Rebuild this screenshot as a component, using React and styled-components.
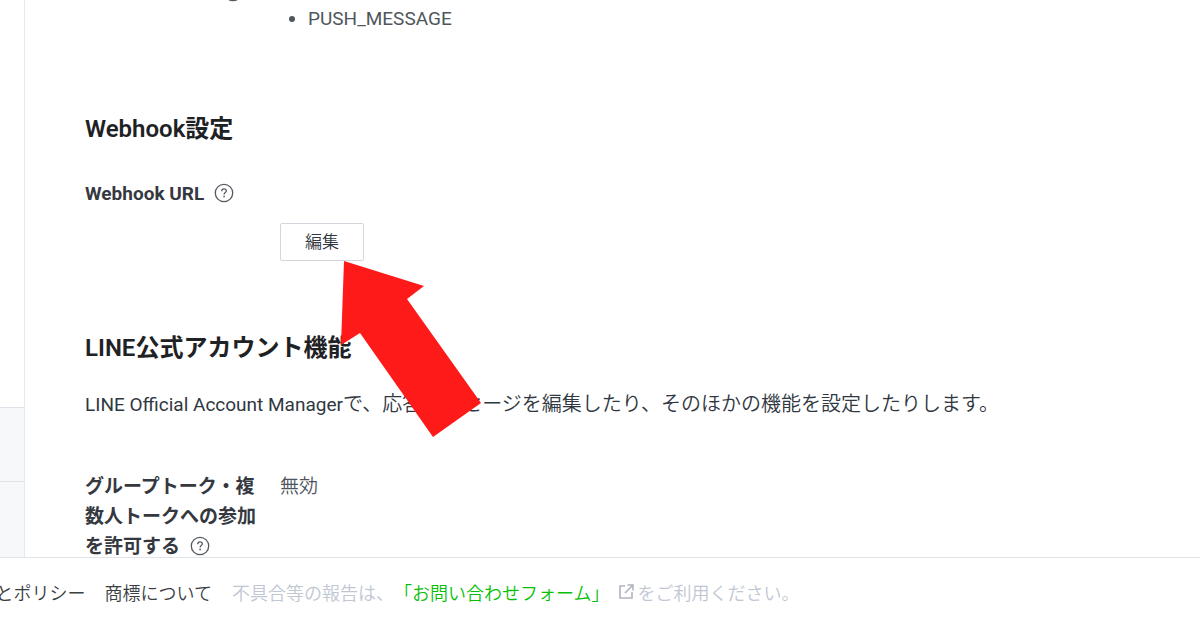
import styled, { createGlobalStyle } from 'styled-components';

const GlobalStyle = createGlobalStyle`
  * {
    box-sizing: border-box;
  }

  body {
    margin: 0;
    background: #fff;
    color: #303741;
    font-family: Roboto, "Noto Sans CJK JP", sans-serif;
    font-size: 19px;
    line-height: 30px;
    text-spacing-trim: space-all;
  }
`;

const Page = styled.div`
  display: flex;
  flex-direction: column;
  height: 100vh;
  overflow: hidden;
`;

const Body = styled.div`
  display: flex;
  flex: 1;
  min-height: 0;
  overflow: hidden;
`;

const Sidebar = styled.aside`
  display: flex;
  flex: none;
  flex-direction: column;
  justify-content: flex-end;
  width: 25px;
  border-right: 1px solid #e3e9f0;
`;

const SideBlock = styled.div`
  height: ${({ $height }) => $height}px;
  border-top: 1px solid #dfe3e9;
  background: #f7f8fa;
`;

const Main = styled.main`
  flex: 1;
  padding: 0 60px;
`;

const Row = styled.section`
  display: grid;
  grid-template-columns: 180px 1fr;
  column-gap: 15px;
`;

const Label = styled.h3`
  margin: 0;
  color: #35393f;
  font-size: 19px;
  font-weight: 700;
`;

const WebhookLabel = styled(Label)`
  grid-column: 1 / -1;
  margin-top: 32px;
`;

// the row above is scrolled almost out of view
const ScrolledHelp = styled.div`
  height: 20px;
  margin: -18px 0 0 128px;
  line-height: 20px;
`;

const Value = styled.div`
  color: #4e545c;
  font-weight: 350;
`;

const EventList = styled.ul`
  margin: 0;
  padding: 4px 0 0 28px;
  color: #50565d;
`;

const Title = styled.h2`
  margin: ${({ $top }) => $top}px 0 0;
  color: #1f2225;
  font-size: 24px;
  font-weight: 600;
  line-height: 36px;
`;

const Description = styled.p`
  margin: 23px 0 52px;
  font-size: 20px;
  font-weight: 350;
`;

const Latin = styled.span`
  font-size: 19px;
  font-weight: 400;
`;

const HelpButton = styled.button`
  display: inline-flex;
  margin: 0 0 0 10px;
  padding: 0;
  border: 0;
  background: none;
  color: #555a60;
  vertical-align: -3px;
`;

const EditArea = styled.div`
  position: relative;
  grid-column: 2;
  width: fit-content;
  margin-top: 14px;
`;

const EditButton = styled.button`
  display: block;
  padding: 3px 24px;
  border: 1px solid #d3d7dd;
  border-radius: 2px;
  background: #fff;
  color: #303741;
  font: inherit;
  font-size: 17px;
  font-weight: 350;
`;

const Arrow = styled.svg`
  position: absolute;
  top: 100%;
  left: 61px;
  z-index: 1;
  pointer-events: none;
`;

const Footer = styled.footer`
  display: flex;
  flex: none;
  padding: 21px 0;
  border-top: 1px solid #dfe4eb;
  overflow: hidden;
  color: #c0c7d3;
  font-size: 18px;
  font-weight: 350;
  white-space: nowrap;
`;

const FooterNav = styled.nav`
  display: flex;
  flex: none;
  justify-content: flex-end;
  gap: 19px;
  width: 212px;
  margin-right: 20px;
`;

const FooterLink = styled.a`
  flex: none;
  color: ${({ $green }) => ($green ? '#08bf08' : '#3b3e42')};
  text-decoration: none;
`;

const ExternalIcon = styled.svg`
  margin: 0 3px 0 10px;
  vertical-align: 1px;
`;

function Help({ label }) {
  return (
    <HelpButton type="button" aria-label={label}>
      <svg width="20" height="20" viewBox="0 0 20 20" fill="none" stroke="currentColor">
        <circle cx="10" cy="10" r="8.7" strokeWidth="1.3" />
        <path d="M7.7 8.2c0-1.5 1-2.3 2.3-2.3s2.3.8 2.3 2c0 1.6-2.2 1.8-2.2 3.5" strokeWidth="1.3" />
        <path d="M9.3 13.5h1.6" strokeWidth="1.5" />
      </svg>
    </HelpButton>
  );
}

export default function App() {
  return (
    <>
      <GlobalStyle />
      <Page>
        <Body>
          <Sidebar>
            <SideBlock $height={74} />
            <SideBlock $height={76} />
          </Sidebar>
          <Main>
            <Row>
              <ScrolledHelp>
                <Help label="ヘルプ" />
              </ScrolledHelp>
              <EventList>
                <li>PUSH_MESSAGE</li>
              </EventList>
            </Row>

            <Title $top={77}>Webhook設定</Title>
            <Row>
              <WebhookLabel>
                Webhook URL
                <Help label="ヘルプ" />
              </WebhookLabel>
              <EditArea>
                <EditButton type="button">編集</EditButton>
                <Arrow width="142" height="178" viewBox="0 0 142 178" aria-hidden="true">
                  <path d="M3 0 83 25 66 38 140 142 92 176 19 72 0 84Z" fill="#ff1a1a" />
                </Arrow>
              </EditArea>
            </Row>

            <Title $top={69}>LINE公式アカウント機能</Title>
            <Description>
              <Latin>LINE Official Account Manager</Latin>
              で、応答メッセージを編集したり、そのほかの機能を設定したりします。
            </Description>
            <Row>
              <Label>
                グループトーク・複数人トークへの参加を許可する
                <Help label="ヘルプ" />
              </Label>
              <Value>無効</Value>
            </Row>
          </Main>
        </Body>
        <Footer>
          <FooterNav>
            <FooterLink href="#policy">規約とポリシー</FooterLink>
            <FooterLink href="#trademark">商標について</FooterLink>
          </FooterNav>
          <span>
            不具合等の報告は、
            <FooterLink href="#contact" $green>
              「お問い合わせフォーム」
            </FooterLink>
            <ExternalIcon width="15" height="15" viewBox="0 0 15 15" fill="none" stroke="#b0b5bd" strokeWidth="1.6">
              <path d="M6 2H1v12h12V8M8.5 1H14v5.500M13.500 1.500 6 9" />
            </ExternalIcon>
            をご利用ください。
          </span>
        </Footer>
      </Page>
    </>
  );
}
